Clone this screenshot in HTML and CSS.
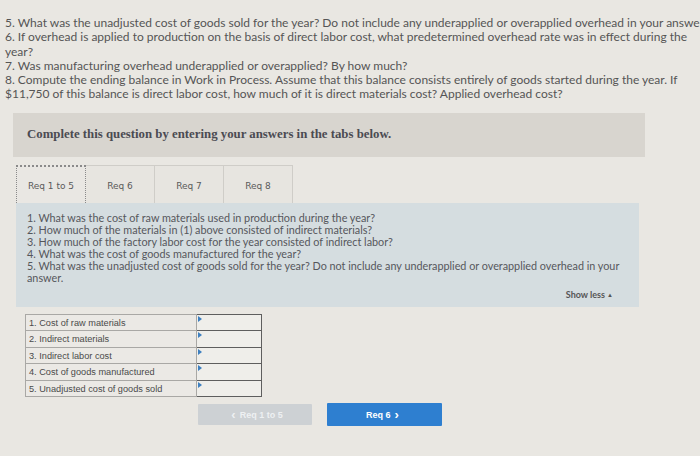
FILE: index.html
```html
<!DOCTYPE html>
<html>
<head>
<meta charset="utf-8">
<link rel="stylesheet" href="styles.css">
</head>
<body>
<div class="intro">
  <div class="ln">5. What was the unadjusted cost of goods sold for the year? Do not include any underapplied or overapplied overhead in your answer.</div>
  <div class="ln">6. If overhead is applied to production on the basis of direct labor cost, what predetermined overhead rate was in effect during the</div>
  <div class="ln">year?</div>
  <div class="ln">7. Was manufacturing overhead underapplied or overapplied? By how much?</div>
  <div class="ln">8. Compute the ending balance in Work in Process. Assume that this balance consists entirely of goods started during the year. If</div>
  <div class="ln">$11,750 of this balance is direct labor cost, how much of it is direct materials cost? Applied overhead cost?</div>
</div>

<div class="complete">Complete this question by entering your answers in the tabs below.</div>

<div class="work">
  <div class="tabs">
    <div class="tab active">Req 1 to 5</div>
    <div class="tab">Req 6</div>
    <div class="tab">Req 7</div>
    <div class="tab">Req 8</div>
  </div>
  <div class="qpanel">
    <div class="qline">1. What was the cost of raw materials used in production during the year?</div>
    <div class="qline">2. How much of the materials in (1) above consisted of indirect materials?</div>
    <div class="qline">3. How much of the factory labor cost for the year consisted of indirect labor?</div>
    <div class="qline">4. What was the cost of goods manufactured for the year?</div>
    <div class="qline">5. What was the unadjusted cost of goods sold for the year? Do not include any underapplied or overapplied overhead in your<br>answer.</div>
    <div class="showless">Show less<span class="tri">▲</span></div>
  </div>

  <table class="answers">
    <tr><td class="lbl">1. Cost of raw materials</td><td class="inp"><span class="mark"></span></td></tr>
    <tr><td class="lbl">2. Indirect materials</td><td class="inp"><span class="mark"></span></td></tr>
    <tr><td class="lbl">3. Indirect labor cost</td><td class="inp"><span class="mark"></span></td></tr>
    <tr><td class="lbl">4. Cost of goods manufactured</td><td class="inp"><span class="mark"></span></td></tr>
    <tr><td class="lbl">5. Unadjusted cost of goods sold</td><td class="inp"><span class="mark"></span></td></tr>
  </table>

  <div class="nav">
    <div class="btn prev"><span class="chev">&lsaquo;</span> Req 1 to 5</div>
    <div class="btn next">Req 6 <span class="chev">&rsaquo;</span></div>
  </div>
</div>
</body>
</html>
```

FILE: styles.css
```css
html, body {
  margin: 0;
  padding: 0;
}
body {
  width: 700px;
  height: 456px;
  overflow: hidden;
  background: #e9e7e2;
  font-family: "Lato", "Liberation Sans", sans-serif;
  color: #4a4a4a;
}
.intro {
  padding: 16px 0 0 5px;
  width: 695px;
  overflow: hidden;
  font-size: 12px;
  line-height: 14.3px;
  color: #555555;
}
.ln {
  white-space: nowrap;
}
.complete {
  margin: 11px 0 0 13px;
  width: 618px;
  height: 44px;
  padding-left: 14px;
  background: #d8d5cf;
  display: flex;
  align-items: center;
  font-family: "Liberation Serif", serif;
  font-weight: bold;
  font-size: 12.8px;
  color: #4b4b52;
}
.work {
  margin: 8px 0 0 16px;
  width: 623px;
}
.tabs {
  display: flex;
  height: 38px;
}
.tab {
  width: 69px;
  box-sizing: border-box;
  border: 1px solid #cfcdc8;
  border-bottom: none;
  border-left: none;
  background: #e7e5e0;
  display: flex;
  align-items: center;
  justify-content: center;
  padding-top: 3px;
  font-family: "DejaVu Sans", sans-serif;
  font-size: 9px;
  color: #5a5a5a;
}
.tab.active {
  width: 70px;
  border: 1px dotted #8a8a8a;
  border-bottom: none;
  border-top: 2px dotted #8a8a8a;
  background: #e9e7e3;
}
.qpanel {
  background: #d5dde0;
  padding: 9px 11px 6px 11px;
  height: 89px;
  font-size: 10.8px;
  line-height: 12.1px;
  color: #55575c;
}
.qline {
  white-space: nowrap;
}
.showless {
  margin-top: 5px;
  text-align: right;
  padding-right: 15px;
  font-weight: bold;
  font-size: 9px;
  color: #555;
}
.tri {
  font-size: 6px;
  margin-left: 2px;
  vertical-align: 1px;
}
.answers {
  margin: 7px 0 0 9px;
  border-collapse: collapse;
  font-family: "Liberation Sans", sans-serif;
  font-size: 9.2px;
  color: #4a4a4a;
}
.answers td {
  height: 15.5px;
  padding: 0;
}
.lbl {
  width: 167px;
  border: 1px solid #a9a8a5;
  padding-left: 3px !important;
  background: #ebe9e5;
}
.inp {
  width: 64px;
  border: 1.5px solid #5e5e5e;
  background: #efeeea;
  position: relative;
}
.mark {
  position: absolute;
  left: 1px;
  top: 1px;
  width: 0;
  height: 0;
  border-top: 3px solid transparent;
  border-bottom: 3px solid transparent;
  border-left: 4px solid #3d7fbf;
}
.nav {
  display: flex;
  gap: 15px;
  margin: 6px 0 0 182px;
  align-items: center;
}
.btn {
  display: flex;
  align-items: center;
  justify-content: center;
  font-family: "Liberation Sans", sans-serif;
  font-weight: bold;
  font-size: 9px;
  color: #fff;
  border-radius: 1px;
}
.prev {
  width: 114px;
  height: 21px;
  background: #cdd1d4;
  color: #eef0f2;
}
.next {
  width: 115px;
  height: 23px;
  background: #2e7fd0;
}
.chev {
  font-size: 13px;
  margin: 0 4px;
  line-height: 1;
}
```
